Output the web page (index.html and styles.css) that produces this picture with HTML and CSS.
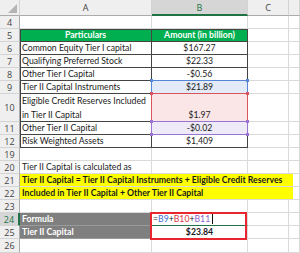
FILE: index.html
```html
<!DOCTYPE html>
<html>
<head>
<meta charset="utf-8">
<link rel="stylesheet" href="styles.css">
</head>
<body>
<div class="sheet">
  <div class="ch corner"><svg width="9" height="9" viewBox="0 0 9 9"><polygon points="9,0 9,9 0,9" fill="#b4b4b4"/></svg></div>
  <div class="ch">A</div>
  <div class="ch act">B</div>
  <div class="ch">C</div>
  <div class="ch"></div>

  <div class="rh">4</div><div class="c"></div><div class="c"></div><div class="c"></div><div class="c"></div>

  <div class="rh">5</div><div class="c t ta hdr ctr">Particulars</div><div class="c t hdr ctr">Amount (in billion)</div><div class="c"></div><div class="c"></div>

  <div class="rh">6</div><div class="c t ta">Common Equity Tier I capital</div><div class="c t ctr">$167.27</div><div class="c"></div><div class="c"></div>

  <div class="rh">7</div><div class="c t ta">Qualifying Preferred Stock</div><div class="c t ctr">$22.33</div><div class="c"></div><div class="c"></div>

  <div class="rh">8</div><div class="c t ta">Other Tier I Capital</div><div class="c t ctr">-$0.56</div><div class="c"></div><div class="c"></div>

  <div class="rh">9</div><div class="c t ta">Tier II Capital Instruments</div><div class="c t ctr hl blue">$21.89<i class="h tl"></i><i class="h tr"></i><i class="h bl"></i><i class="h br"></i></div><div class="c"></div><div class="c"></div>

  <div class="rh">10</div><div class="c t ta wrap">Eligible Credit Reserves Included<br>in Tier II Capital</div><div class="c t ctr hl red">$1.97<i class="h tl"></i><i class="h tr"></i><i class="h bl"></i><i class="h br"></i></div><div class="c"></div><div class="c"></div>

  <div class="rh">11</div><div class="c t ta">Other Tier II Capital</div><div class="c t ctr hl purple">-$0.02<i class="h tl"></i><i class="h tr"></i><i class="h bl"></i><i class="h br"></i></div><div class="c"></div><div class="c"></div>

  <div class="rh">12</div><div class="c t ta">Risk Weighted Assets</div><div class="c t ctr">$1,409</div><div class="c"></div><div class="c"></div>

  <div class="rh">19</div><div class="c"></div><div class="c"></div><div class="c"></div><div class="c"></div>

  <div class="rh">20</div><div class="c">Tier II Capital is calculated as</div><div class="c"></div><div class="c"></div><div class="c"></div>

  <div class="rh">21</div><div class="c yel">Tier II Capital = Tier II Capital Instruments + Eligible Credit Reserves</div><div class="c"></div>

  <div class="rh">22</div><div class="c yel">Included in Tier II Capital + Other Tier II Capital</div><div class="c"></div>

  <div class="rh">23</div><div class="c"></div><div class="c"></div><div class="c"></div><div class="c"></div>

  <div class="rh ract">24</div><div class="c gry">Formula</div><div class="c edit"><span>=</span><span class="rb">B9</span><span>+</span><span class="rr">B10</span><span>+</span><span class="rp">B11</span><span class="cur"></span><i class="box"></i></div><div class="c"></div><div class="c"></div>

  <div class="rh">25</div><div class="c gry">Tier II Capital</div><div class="c ctr bold">$23.84</div><div class="c"></div><div class="c"></div>

  <div class="rh">26</div><div class="c"></div><div class="c"></div><div class="c"></div><div class="c"></div>
</div>
</body>
</html>
```

FILE: styles.css
```css
html, body {
  margin: 0;
  padding: 0;
  background: #ffffff;
}

body {
  width: 300px;
  height: 253px;
  overflow: hidden;
  font-family: Lato, "Open Sans", "Liberation Sans", sans-serif;
  font-size: 8.7px;
  color: #1a1a1a;
}

.sheet {
  display: grid;
  grid-template-columns: 20px 132px 96px 41px 11px;
  grid-template-rows: 16px 13px 13px 13px 13px 13px 13px 28px 13px 13px 13px 13px 13px 13px 13px 13px 13px 14px;
}

.ch {
  background: #efefef;
  border-right: 1px solid #d4d4d4;
  border-bottom: 1px solid #ababab;
  box-sizing: border-box;
  display: flex;
  align-items: center;
  justify-content: center;
  color: #444;
  font-family: "Open Sans", Lato, sans-serif;
  font-size: 9px;
}

.corner {
  align-items: flex-end;
  justify-content: flex-end;
  padding: 0 2px 2px 0;
}

.ch.act {
  background: #d6d6d6;
  border-bottom: 2px solid #217346;
  color: #217346;
}

.rh {
  background: #efefef;
  border-right: 1px solid #ababab;
  border-bottom: 1px solid #d4d4d4;
  box-sizing: border-box;
  display: flex;
  align-items: center;
  justify-content: center;
  color: #444;
  font-family: "Open Sans", Lato, sans-serif;
  font-size: 9px;
}

.rh.ract {
  background: #d6d6d6;
  color: #217346;
  border-right: 2px solid #217346;
}

.c {
  box-sizing: border-box;
  border-right: 1px solid #dadada;
  border-bottom: 1px solid #dadada;
  display: flex;
  align-items: flex-end;
  padding: 0 2px 0 2px;
  white-space: nowrap;
  line-height: 12px;
  position: relative;
}

.c.t {
  border-right-color: #444;
  border-bottom-color: #444;
}

.c.ta {
  box-shadow: inset 1px 0 #444;
}

.c.ctr {
  justify-content: center;
}

.c.hdr {
  background: #00b050;
  color: #ffffff;
  font-weight: 700;
  box-shadow: inset 0 1px #444;
}

.c.ta.hdr {
  box-shadow: inset 1px 1px #444;
}

.c.wrap {
  line-height: 13.5px;
}

.hl::after {
  content: "";
  position: absolute;
  left: -1px;
  top: -1px;
  right: -1px;
  bottom: -1px;
  border: 1px solid var(--hc);
}

.blue {
  --hc: #5586d8;
  background: #e3ebf8;
}

.red {
  --hc: #d9545d;
  background: #fbe6e7;
}

.purple {
  --hc: #9a74d2;
  background: #efeaf8;
}

.h {
  position: absolute;
  width: 3px;
  height: 3px;
  background: var(--hc);
  z-index: 2;
}

.h.tl { left: -2px; top: -2px; }
.h.tr { right: -2px; top: -2px; }
.h.bl { left: -2px; bottom: -2px; }
.h.br { right: -2px; bottom: -2px; }

.c.yel {
  grid-column: 2 / 5;
  background: #ffff00;
  font-weight: 700;
  margin-right: -4px;
  border-right: none;
}

.c.gry {
  background: #7f7f7f;
  color: #ffffff;
  font-weight: 700;
  border-bottom-color: #9a9a9a;
}

.c.bold {
  font-weight: 700;
}

.c.edit {
  border-bottom: 1px solid #217346;
  padding-left: 1px;
}

.rb { color: #3d6fd6; }
.rr { color: #d93540; }
.rp { color: #8d5fcc; }

.cur {
  display: inline-block;
  width: 1px;
  height: 10px;
  background: #111;
  margin-left: 2px;
  margin-bottom: 1px;
}

.box {
  position: absolute;
  left: -2px;
  top: -1px;
  width: calc(100% + 2px);
  height: 28px;
  border: 2px solid #e8262d;
  box-sizing: border-box;
  z-index: 3;
}
```
